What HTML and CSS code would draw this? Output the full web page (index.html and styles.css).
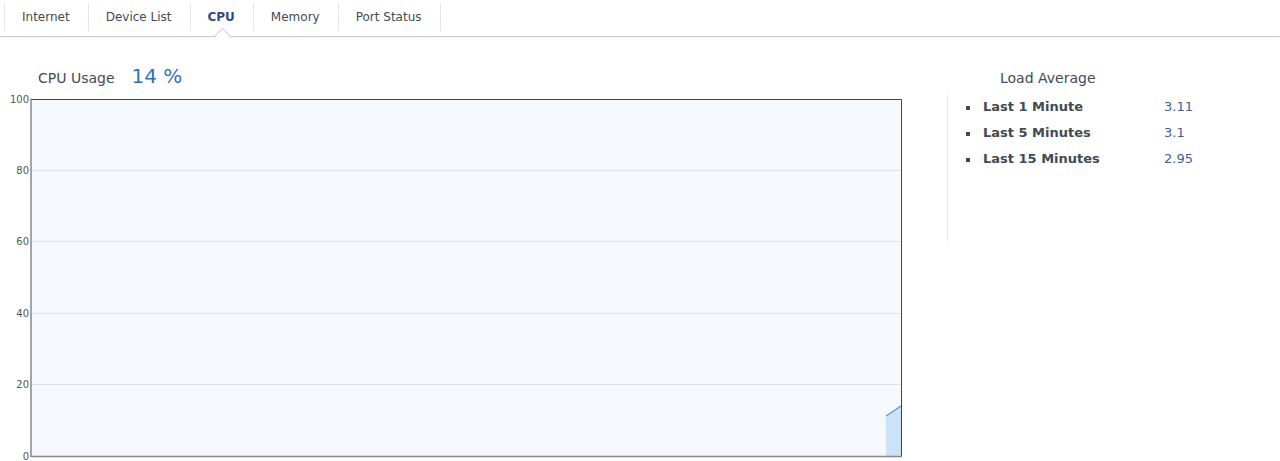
FILE: index.html
```html
<!DOCTYPE html>
<html>
<head>
<meta charset="utf-8">
<link rel="stylesheet" href="styles.css">
</head>
<body>
<div class="tabs">
  <div class="tab">Internet</div>
  <div class="tab">Device List</div>
  <div class="tab active">CPU</div>
  <div class="tab">Memory</div>
  <div class="tab">Port Status</div>
</div>
<div class="content">
  <div class="cpu">
    <div class="cpu-head"><span class="cpu-title">CPU Usage</span><span class="cpu-val">14 %</span></div>
    <svg class="chart" width="910" height="378" viewBox="0 -6 910 378">
      <rect x="31" y="1" width="870" height="358" fill="#f5f8fd"/>
      <g stroke="#dde1e7" stroke-width="1">
        <line x1="32" y1="72.5" x2="900" y2="72.5"/>
        <line x1="32" y1="143.5" x2="900" y2="143.5"/>
        <line x1="32" y1="215.5" x2="900" y2="215.5"/>
        <line x1="32" y1="286.5" x2="900" y2="286.5"/>
      </g>
      <polygon points="886,318 901,308 901,358 886,358" fill="#cce3f7"/>
      <line x1="886" y1="318" x2="901" y2="308" stroke="#5b8fd6" stroke-width="1.2"/>
      <polyline points="31,1.5 901.5,1.5 901.5,359" fill="none" stroke="#444" stroke-width="1"/>
      <line x1="31" y1="0.5" x2="31" y2="359" stroke="#888" stroke-width="1.5"/>
      <line x1="31" y1="358.5" x2="902" y2="358.5" stroke="#888" stroke-width="1.5"/>
      <g class="axis" font-size="10" fill="#555" text-anchor="end">
        <text x="29" y="5">100</text>
        <text x="29" y="76">80</text>
        <text x="29" y="147">60</text>
        <text x="29" y="219">40</text>
        <text x="29" y="290">20</text>
        <text x="29" y="362">0</text>
      </g>
    </svg>
  </div>
  <div class="load">
    <div class="load-title">Load Average</div>
    <ul class="load-list">
      <li><span class="lbl">Last 1 Minute</span><span class="val">3.11</span></li>
      <li><span class="lbl">Last 5 Minutes</span><span class="val">3.1</span></li>
      <li><span class="lbl">Last 15 Minutes</span><span class="val">2.95</span></li>
    </ul>
  </div>
</div>
</body>
</html>
```
FILE: styles.css
```css
html, body {
  margin: 0;
  padding: 0;
  background: #fff;
  overflow: hidden;
}
body {
  font-family: "DejaVu Sans", Verdana, sans-serif;
  color: #414b55;
  width: 1280px;
  height: 461px;
}
.tabs {
  display: flex;
  height: 37px;
  border-bottom: 1px solid #c9ced6;
  box-shadow: 0 1px 2px rgba(0,0,0,0.06);
  padding-left: 4px;
  box-sizing: border-box;
  align-items: flex-start;
  padding-top: 3px;
}
.tab {
  position: relative;
  font-size: 12px;
  color: #414b55;
  height: 28px;
  line-height: 28px;
  padding: 0 18px 0 17px;
  border-left: 1px solid #e2e7ee;
  white-space: nowrap;
}
.tab:last-child {
  border-right: 1px solid #e2e7ee;
}
.tab.active {
  font-weight: bold;
  color: #2e4d7e;
}
.tab.active::after {
  content: "";
  position: absolute;
  left: 50%;
  bottom: -10px;
  width: 10px;
  height: 10px;
  margin-left: -5px;
  background: #fff;
  border-left: 1px solid #c9ced6;
  border-top: 1px solid #c9ced6;
  transform: rotate(45deg);
}
.content {
  display: flex;
  padding-top: 30px;
}
.cpu {
  width: 910px;
}
.cpu-head {
  display: flex;
  align-items: baseline;
  padding-left: 38px;
  height: 22px;
  line-height: 18px;
}
.cpu-title {
  font-size: 14px;
  color: #414b55;
}
.cpu-val {
  font-size: 20px;
  color: #2f72c4;
  margin-left: 17px;
}
.chart {
  display: block;
  margin-top: 3px;
  overflow: visible;
}
.axis {
  font-family: "DejaVu Sans", Verdana, sans-serif;
}
.load {
  margin-left: 37px;
  width: 320px;
}
.load-title {
  font-size: 14px;
  color: #414b55;
  padding-left: 53px;
  height: 24px;
  line-height: 22px;
}
.load-list {
  list-style: none;
  margin: 4px 0 0 0;
  padding: 2px 0 0 0;
  border-left: 1px solid #e2e6ee;
  height: 144px;
}
.load-list li {
  display: flex;
  font-size: 13px;
  height: 26px;
  line-height: 20px;
  padding-left: 20px;
  position: relative;
}
.load-list li::before {
  content: "";
  position: absolute;
  left: 18px;
  top: 9px;
  width: 4px;
  height: 4px;
  background: #414b55;
}
.lbl {
  font-weight: bold;
  color: #414b55;
  width: 181px;
  padding-left: 15px;
}
.val {
  color: #3a5f9a;
}
```
